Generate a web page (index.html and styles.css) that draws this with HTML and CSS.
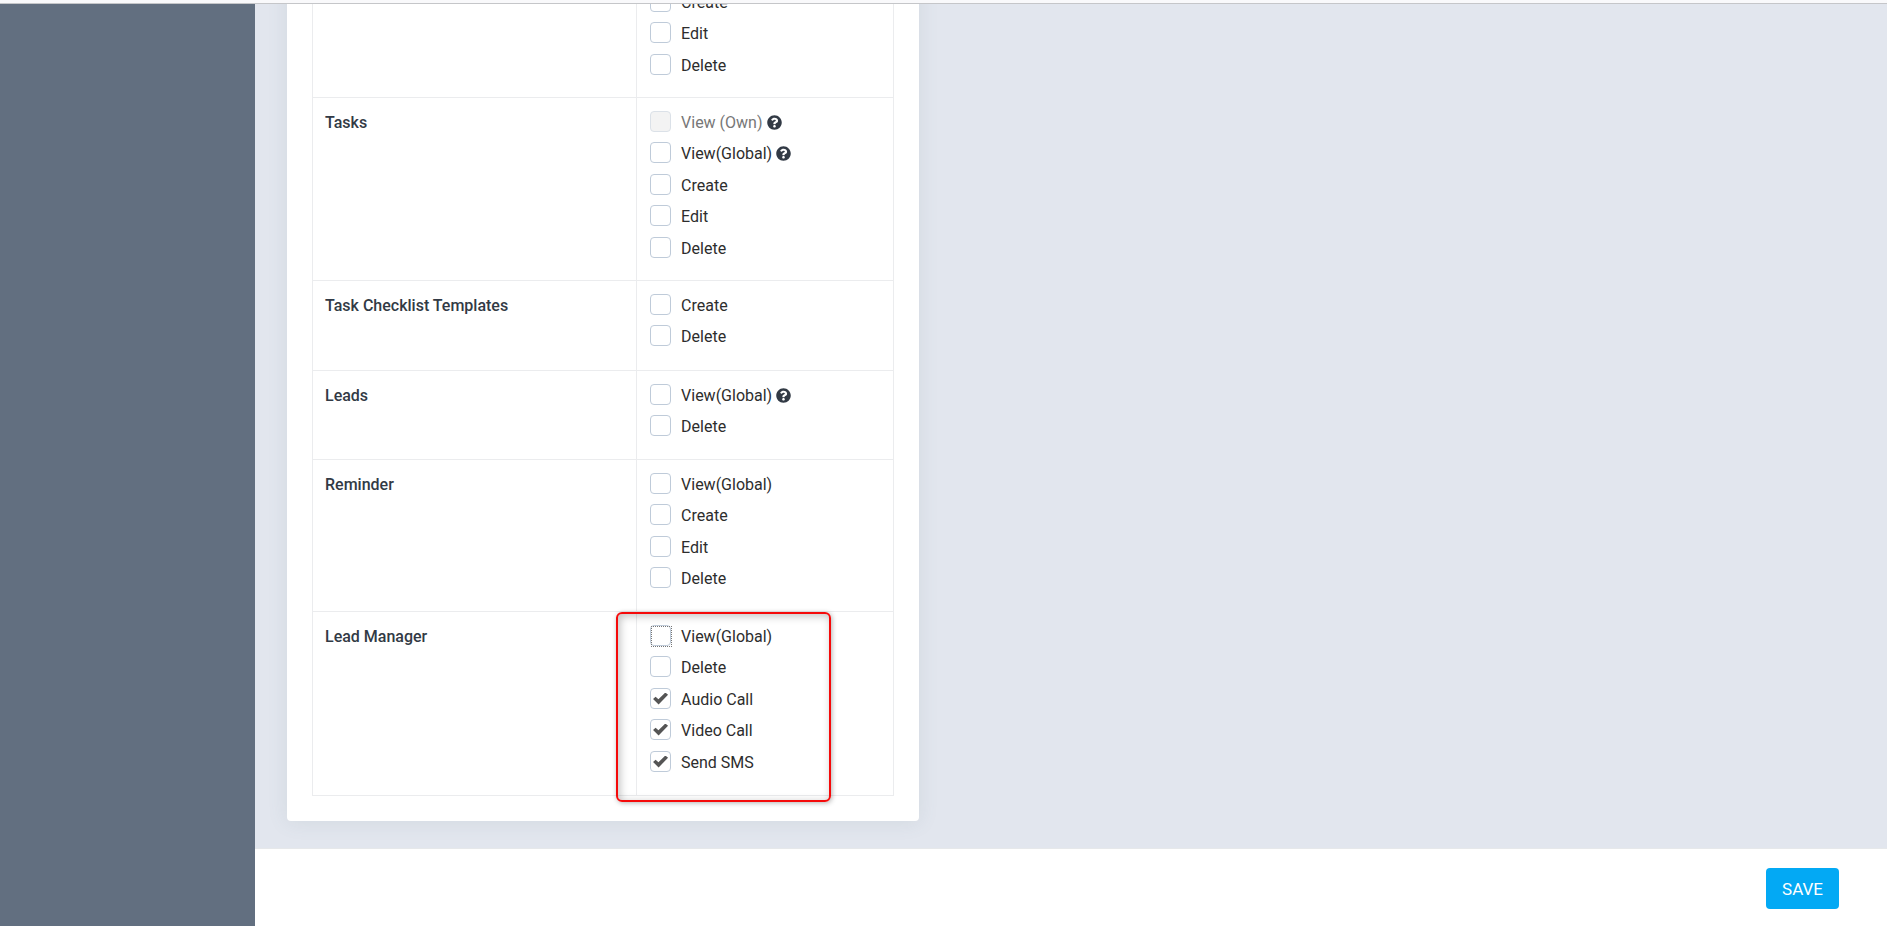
FILE: index.html
```html
<!DOCTYPE html>
<html lang="en">
<head>
  <meta charset="UTF-8">
  <title>Role Permissions</title>
  <link rel="stylesheet" href="styles.css">
</head>
<body>
  <svg class="sprite" aria-hidden="true">
    <symbol id="icon-help" viewBox="0 0 512 512">
      <path fill="currentColor" d="M504 256c0 137-111 248-248 248S8 393 8 256 119 8 256 8s248 111 248 248zM262.700 90c-54.500 0-89.300 23-116.500 63.800-3.500 5.300-2.400 12.400 2.700 16.300l34.700 26.300c5.200 3.900 12.600 3 16.700-2.100 17.900-22.700 30.100-35.800 57.300-35.800 20.400 0 45.700 13.100 45.700 33 0 15-12.400 22.700-32.500 34C247.100 238.500 216 254.900 216 296v4c0 6.600 5.400 12 12 12h56c6.600 0 12-5.400 12-12v-1.300c0-28.500 83.200-29.600 83.200-106.700 0-58-60.200-102-116.500-102zM256 338c-25.400 0-46 20.600-46 46s20.600 46 46 46 46-20.600 46-46-20.600-46-46-46z"/>
    </symbol>
  </svg>

  <div class="topbar"></div>
  <div class="wrapper">
    <aside class="sidebar"></aside>
    <main class="content">
      <form class="role-form" id="roleForm">
        <div class="panel">
          <table class="permissions">
            <tbody>
              <tr>
                <th scope="row"></th>
                <td>
                  <div class="checkbox"><input type="checkbox" id="proj_create"><label for="proj_create">Create</label></div>
                  <div class="checkbox"><input type="checkbox" id="proj_edit"><label for="proj_edit">Edit</label></div>
                  <div class="checkbox"><input type="checkbox" id="proj_delete"><label for="proj_delete">Delete</label></div>
                </td>
              </tr>
              <!-- Tasks -->
              <tr>
                <th scope="row">Tasks</th>
                <td>
                  <div class="checkbox"><input type="checkbox" id="tasks_own" disabled><label for="tasks_own">View (Own)</label><svg class="help"><use href="#icon-help"/></svg></div>
                  <div class="checkbox"><input type="checkbox" id="tasks_view"><label for="tasks_view">View(Global)</label><svg class="help"><use href="#icon-help"/></svg></div>
                  <div class="checkbox"><input type="checkbox" id="tasks_create"><label for="tasks_create">Create</label></div>
                  <div class="checkbox"><input type="checkbox" id="tasks_edit"><label for="tasks_edit">Edit</label></div>
                  <div class="checkbox"><input type="checkbox" id="tasks_delete"><label for="tasks_delete">Delete</label></div>
                </td>
              </tr>
              <!-- Task Checklist Templates -->
              <tr>
                <th scope="row">Task Checklist Templates</th>
                <td>
                  <div class="checkbox"><input type="checkbox" id="checklist_create"><label for="checklist_create">Create</label></div>
                  <div class="checkbox"><input type="checkbox" id="checklist_delete"><label for="checklist_delete">Delete</label></div>
                </td>
              </tr>
              <!-- Leads -->
              <tr>
                <th scope="row">Leads</th>
                <td>
                  <div class="checkbox"><input type="checkbox" id="leads_view"><label for="leads_view">View(Global)</label><svg class="help"><use href="#icon-help"/></svg></div>
                  <div class="checkbox"><input type="checkbox" id="leads_delete"><label for="leads_delete">Delete</label></div>
                </td>
              </tr>
              <!-- Reminder -->
              <tr>
                <th scope="row">Reminder</th>
                <td>
                  <div class="checkbox"><input type="checkbox" id="reminder_view"><label for="reminder_view">View(Global)</label></div>
                  <div class="checkbox"><input type="checkbox" id="reminder_create"><label for="reminder_create">Create</label></div>
                  <div class="checkbox"><input type="checkbox" id="reminder_edit"><label for="reminder_edit">Edit</label></div>
                  <div class="checkbox"><input type="checkbox" id="reminder_delete"><label for="reminder_delete">Delete</label></div>
                </td>
              </tr>
              <!-- Lead Manager -->
              <tr>
                <th scope="row">Lead Manager</th>
                <td class="marked">
                  <div class="checkbox"><input type="checkbox" id="lm_view" class="focused"><label for="lm_view">View(Global)</label></div>
                  <div class="checkbox"><input type="checkbox" id="lm_delete"><label for="lm_delete">Delete</label></div>
                  <div class="checkbox"><input type="checkbox" id="lm_audio" checked><label for="lm_audio">Audio Call</label></div>
                  <div class="checkbox"><input type="checkbox" id="lm_video" checked><label for="lm_video">Video Call</label></div>
                  <div class="checkbox"><input type="checkbox" id="lm_sms" checked><label for="lm_sms">Send SMS</label></div>
                  <div class="highlight"></div>
                </td>
              </tr>
            </tbody>
          </table>
        </div>
      </form>
      <div class="bottom-toolbar">
        <button type="submit" form="roleForm" class="btn-save">SAVE</button>
      </div>
    </main>
  </div>
</body>
</html>
```
FILE: styles.css
```css
* { box-sizing: border-box; }

body {
  display: flex;
  flex-direction: column;
  height: 100vh;
  margin: 0;
  overflow: hidden;
  font-family: Roboto, sans-serif;
  font-size: 16px;
  color: #2d2d2d;
  background: #e2e6ee;
}

.sprite {
  display: none;
}

.topbar {
  flex: none;
  height: 4px;
  background: #f9f9fb;
  border-bottom: 1px solid #c5c6c9;
}

.wrapper {
  display: flex;
  flex: 1;
  min-height: 0;
}

.sidebar {
  flex: none;
  width: 255px;
  background: #626f80;
}

.content {
  display: flex;
  flex: 1;
  flex-direction: column;
  min-width: 0;
}

/* stays scrolled to the last rows */
.role-form {
  display: grid;
  flex: 1;
  grid-template-columns: repeat(12, 1fr);
  column-gap: 37px;
  align-content: end;
  min-height: 0;
  padding: 0 32px 27px;
  overflow: hidden;
}

.panel {
  grid-column: span 5;
  padding: 25px;
  background: #fff;
  border-radius: 4px;
  box-shadow: 0 1px 19px 1px rgba(90, 114, 123, 0.11);
}

.permissions {
  width: 100%;
  border-collapse: collapse;
  table-layout: fixed;
}

.permissions th,
.permissions td {
  border: 1px solid #ebecee;
  vertical-align: top;
}

.permissions th {
  width: 55.8%;
  padding: 15px 12px;
  font-weight: 500;
  line-height: 20px;
  text-align: left;
  color: #323a45;
}

.permissions td {
  padding: 13px 13px 12px;
}

.permissions tr:nth-child(3n) td {
  padding-bottom: 13px;
}

.checkbox {
  display: flex;
  align-items: flex-start;
  height: 31px;
}

.checkbox:nth-child(even) {
  height: 32px;
}

.checkbox input {
  display: grid;
  flex: none;
  place-items: center;
  width: 21px;
  height: 21px;
  margin: 0;
  appearance: none;
  background: #fff;
  border: 1px solid #bfcbd9;
  border-radius: 4px;
}

.checkbox input:checked::before {
  content: "";
  width: 15px;
  height: 12px;
  background: #555;
  clip-path: polygon(0 54%, 17% 35%, 36% 56%, 82% 0, 100% 19%, 37% 100%);
}

.checkbox input:disabled {
  background: #f3f3f3;
  border-color: #dbe1e8;
}

.checkbox input:disabled + label {
  color: #777;
}

/* dotted focus ring just inside the box */
.checkbox input.focused::before {
  content: "";
  width: 19px;
  height: 19px;
  border: 1px dotted #777;
}

.checkbox label {
  padding-left: 10px;
  line-height: 24px;
}

.help {
  width: 15px;
  height: 15px;
  margin: 4px 0 0 4px;
  color: #323a45;
}

/* red marker round the Lead Manager options */
.marked {
  position: relative;
}

.highlight {
  position: absolute;
  top: 0;
  left: -21px;
  width: 215px;
  height: 190px;
  border: 2px solid #f50a0a;
  border-radius: 6px;
  box-shadow: 1px 1px 5px rgba(0, 0, 0, 0.3), inset 2px 2px 8px rgba(0, 0, 0, 0.25);
  pointer-events: none;
}

.bottom-toolbar {
  display: flex;
  flex: none;
  justify-content: flex-end;
  padding: 19px 48px 17px;
  background: #fff;
  border-top: 1px solid #e6e8ea;
}

.btn-save {
  height: 41px;
  padding: 0 16px;
  font-family: inherit;
  font-size: 17px;
  color: #fff;
  background: #03a9f4;
  border: 0;
  border-radius: 4px;
  cursor: pointer;
}
```
